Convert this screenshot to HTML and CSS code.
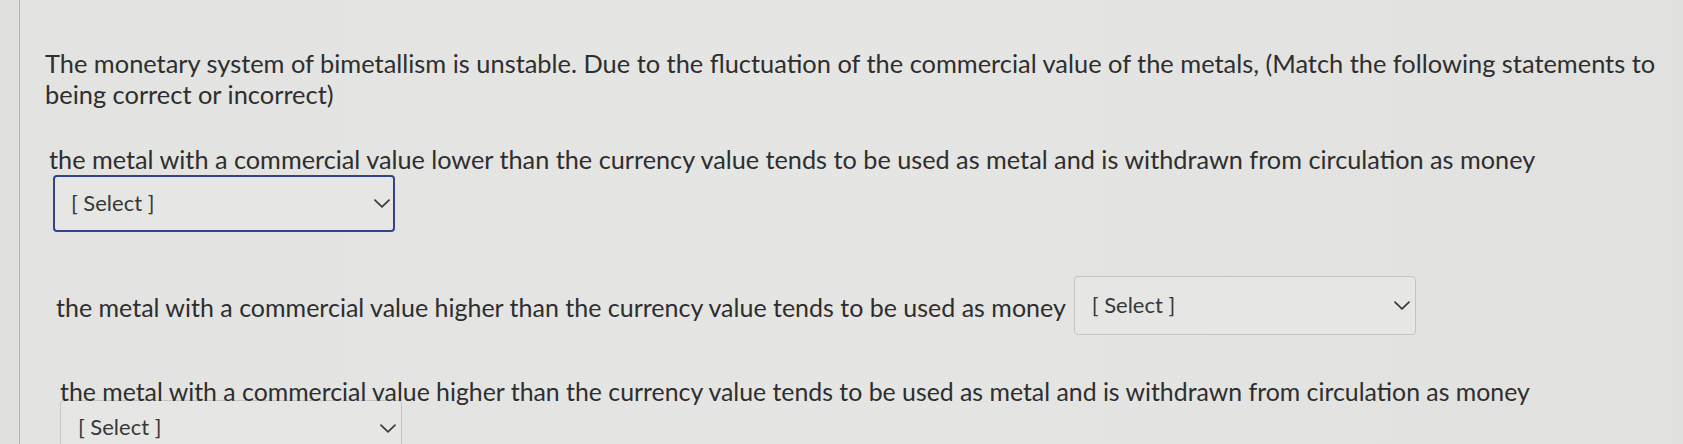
FILE: index.html
```
<!DOCTYPE html>
<html>
<head>
<meta charset="utf-8">
<link rel="stylesheet" href="styles.css">
</head>
<body>
<div class="page">
  <div class="content">
    <p class="question">The monetary system of bimetallism is unstable. Due to the fluctuation of the commercial value of the metals, (Match the following statements to being correct or incorrect)</p>

    <div class="item item-1">
      <div class="stmt">the metal with a commercial value lower than the currency value tends to be used as metal and is withdrawn from circulation as money</div>
      <div class="select select-focus">
        <span class="select-label">[ Select ]</span>
        <svg class="chev" viewBox="0 0 16 9" width="16" height="9"><path d="M1 1.2 L8 7.8 L15 1.2" fill="none" stroke="#3a3a3a" stroke-width="1.7" stroke-linecap="round" stroke-linejoin="round"/></svg>
      </div>
    </div>

    <div class="item item-2 inline">
      <div class="stmt">the metal with a commercial value higher than the currency value tends to be used as money</div>
      <div class="select">
        <span class="select-label">[ Select ]</span>
        <svg class="chev" viewBox="0 0 16 9" width="16" height="9"><path d="M1 1.2 L8 7.8 L15 1.2" fill="none" stroke="#3a3a3a" stroke-width="1.7" stroke-linecap="round" stroke-linejoin="round"/></svg>
      </div>
    </div>

    <div class="item item-3">
      <div class="stmt">the metal with a commercial value higher than the currency value tends to be used as metal and is withdrawn from circulation as money</div>
      <div class="select">
        <span class="select-label">[ Select ]</span>
        <svg class="chev" viewBox="0 0 16 9" width="16" height="9"><path d="M1 1.2 L8 7.8 L15 1.2" fill="none" stroke="#3a3a3a" stroke-width="1.7" stroke-linecap="round" stroke-linejoin="round"/></svg>
      </div>
    </div>
  </div>
</div>
</body>
</html>
```
FILE: styles.css
```
html, body {
  margin: 0;
  padding: 0;
}
body {
  width: 1683px;
  height: 444px;
  overflow: hidden;
  background: #e1e1df;
  font-family: Lato, "Open Sans", sans-serif;
  color: #2e2e2e;
}
.page {
  height: 444px;
  margin-left: 19px;
  border-left: 1px solid #b5b5b3;
  background: linear-gradient(90deg, #e3e3e1 0%, #e5e5e3 50%, #e1e1df 100%);
}
.content {
  padding-left: 25px;
  padding-top: 48px;
}
.question {
  margin: 0;
  font-size: 25.4px;
  line-height: 31px;
  max-width: 1630px;
}
.item {
  line-height: 31px;
}
.item-1 {
  font-size: 25.25px;
  margin-top: 34px;
  padding-left: 4px;
}
.item-1 .select {
  margin-top: 0;
  margin-left: 4px;
  height: 57px;
}
.item-2 {
  font-size: 25px;
  margin-top: 44px;
  padding-left: 11px;
}
.item-3 {
  font-size: 24.85px;
  margin-top: 41px;
  padding-left: 15px;
}
.item-3 .select {
  margin-top: -7px;
}
.inline {
  display: flex;
  align-items: flex-start;
  gap: 8px;
}
.inline .stmt {
  padding-top: 16px;
}
.inline .select {
  height: 59px;
}
.select {
  box-sizing: border-box;
  width: 342px;
  height: 56px;
  border: 1px solid #c4c4c2;
  border-radius: 4px;
  background: #e6e6e4;
  display: flex;
  align-items: center;
  justify-content: space-between;
  padding: 0 5px 0 17px;
}
.select-focus {
  border: 2px solid #34438a;
  padding-left: 16px;
  padding-right: 3px;
}
.select-label {
  font-size: 22px;
  color: #383838;
  margin-top: -3px;
}
.chev {
  display: block;
}
```
